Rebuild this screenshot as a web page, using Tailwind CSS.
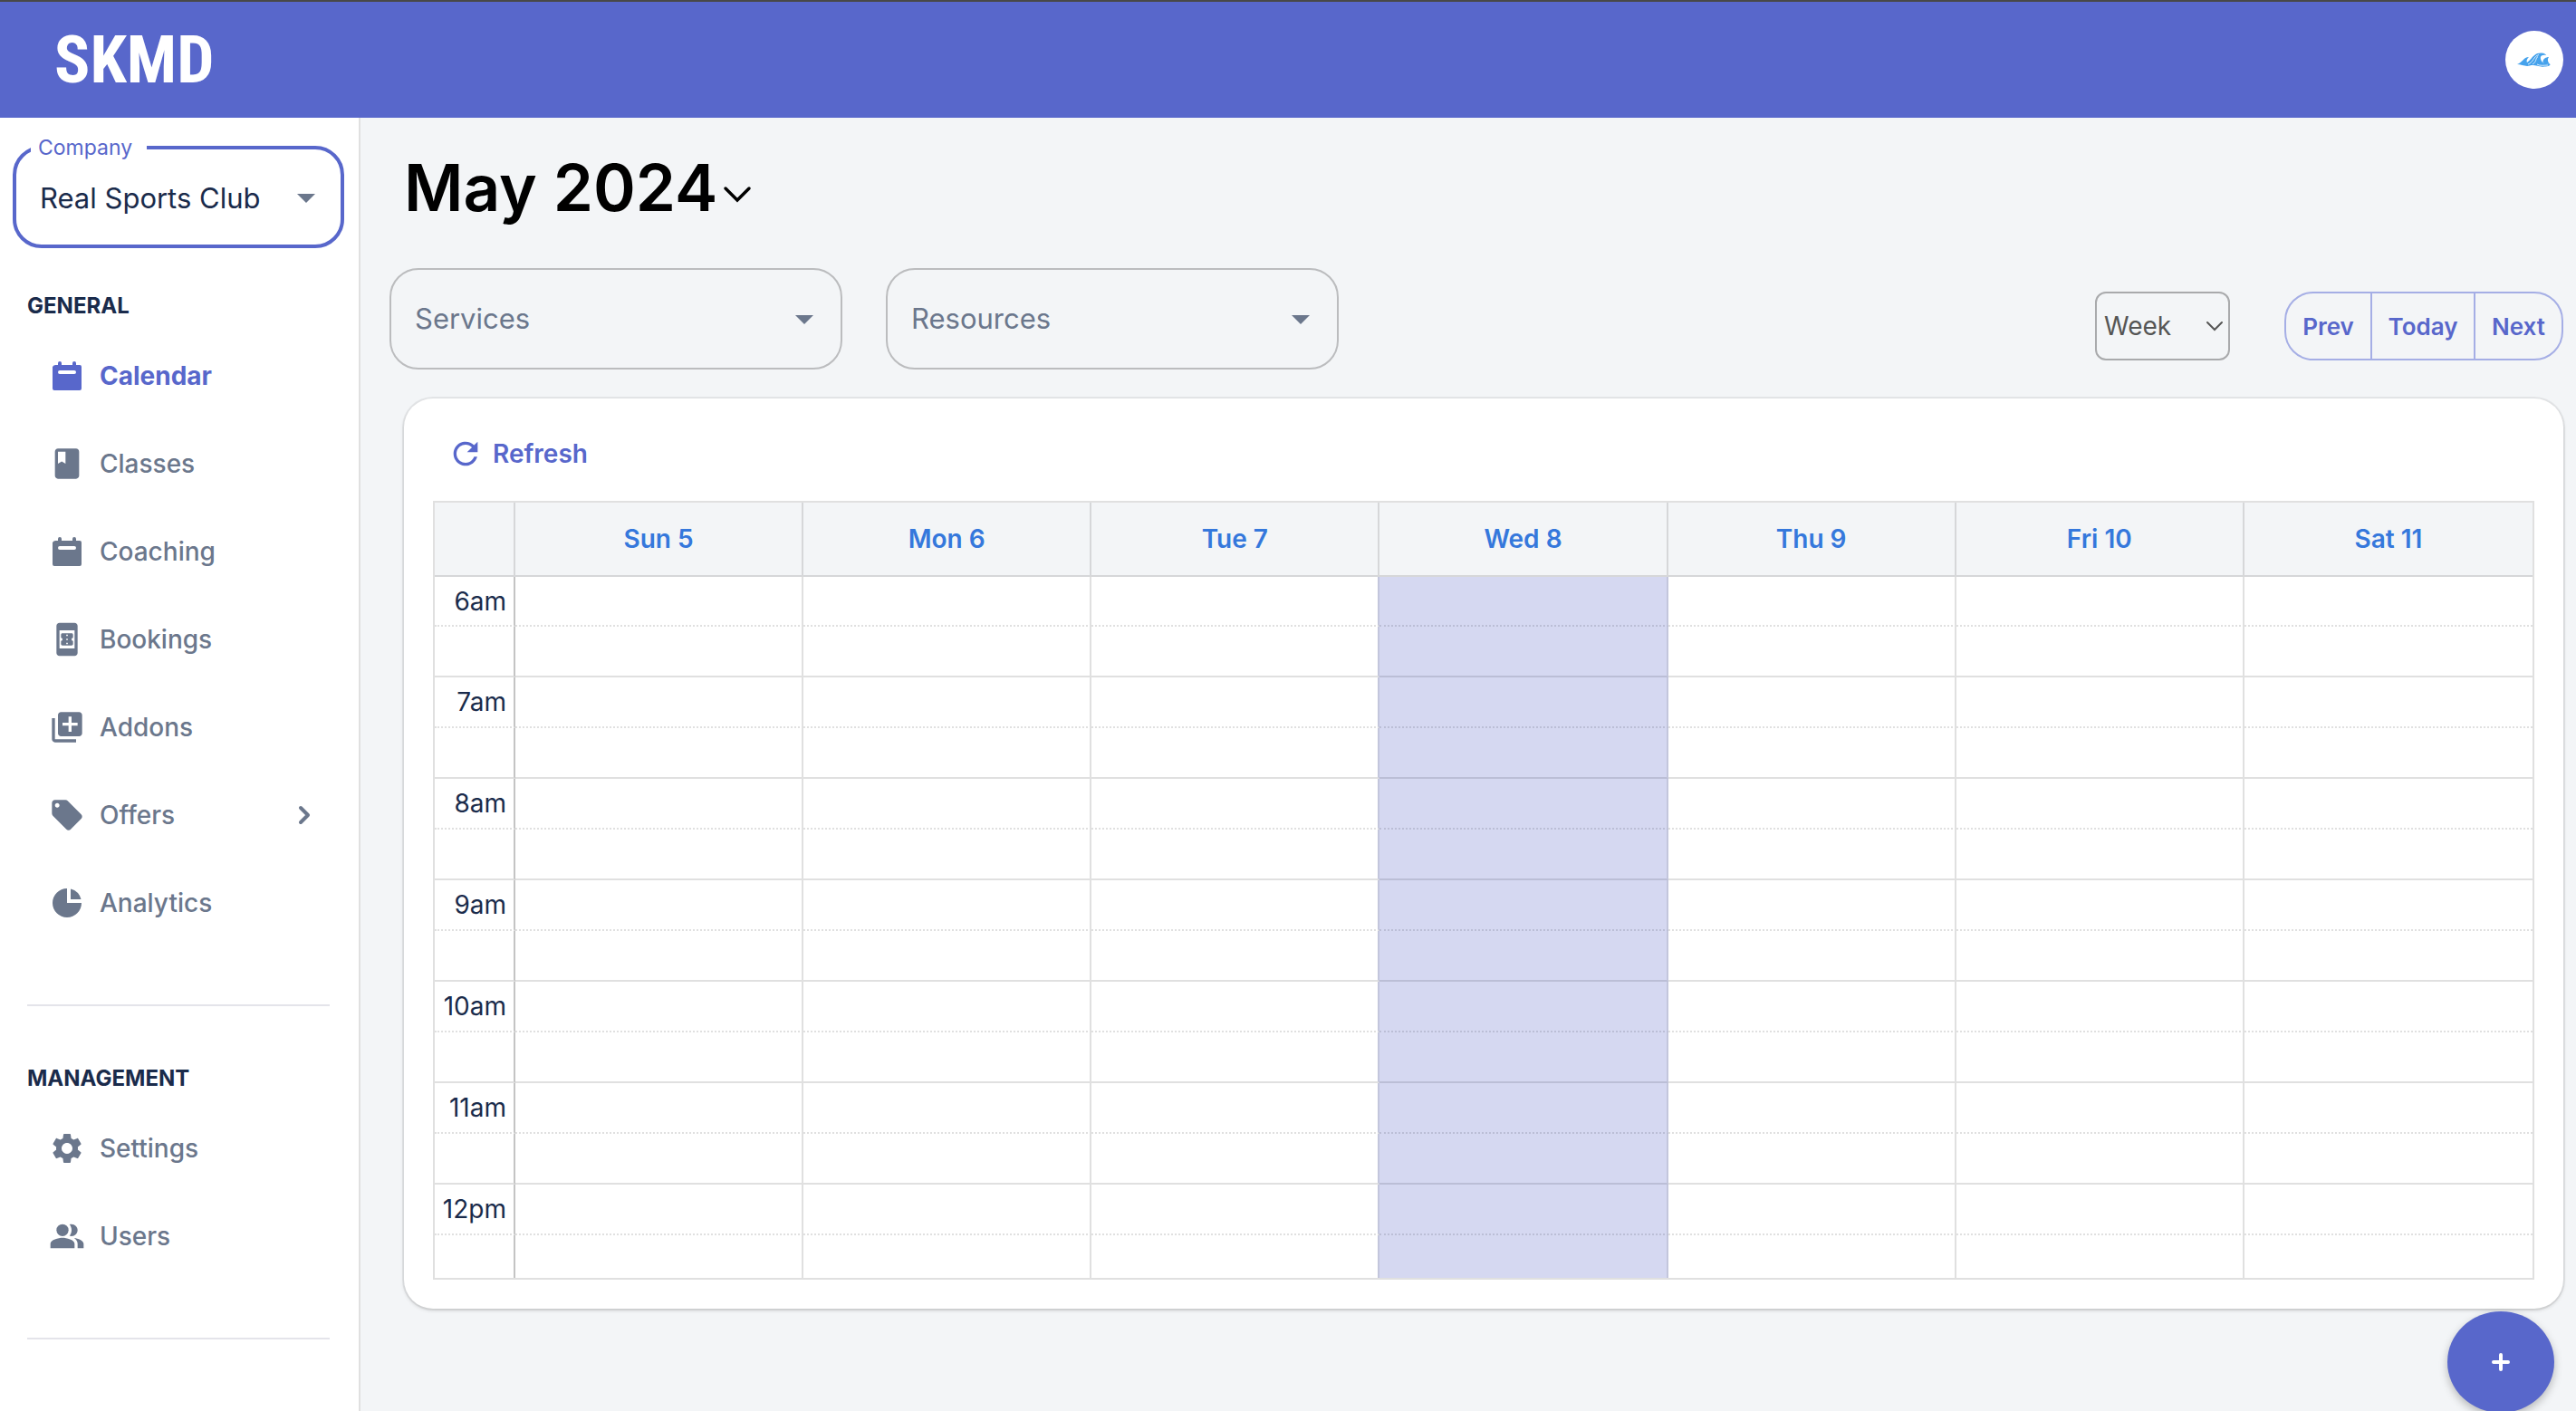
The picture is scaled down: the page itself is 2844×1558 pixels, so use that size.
<!DOCTYPE html>
<html lang="en">
<head>
  <meta charset="UTF-8" />
  <meta name="viewport" content="width=device-width, initial-scale=1.0"/>
  <title>SKMD - Calendar</title>
  <script src="https://cdn.jsdelivr.net/npm/@tailwindcss/browser@4"></script>
  <style>
    body {
      font-family: 'Inter', 'Liberation Sans', sans-serif;
    }
  </style>
</head>
<body class="min-h-screen flex flex-col bg-[#f3f5f7] text-[#1a2b4b]">

  <!-- Header -->
  <header class="h-[130px] shrink-0 bg-[#5867cb] border-t-2 border-[#484848] pl-[60px] pr-3.5 flex justify-between items-center">
    <a href="#" class="text-white font-bold text-[73px] leading-none font-['Roboto_Condensed','Roboto',sans-serif]">SKMD</a>
    <button type="button" aria-label="Account" class="size-16 rounded-full bg-white flex items-center justify-center">
      <svg class="w-[38px] h-4" viewBox="0 0 38 16" fill="#45a2ec">
        <path d="M0 13C5 12 7 5 13 5C11 7 10 9 11 11C17 7 18 0 27 0.500C30 0.700 32 2 32 3C28 2 25 4 26 7C26.500 10 29 12 32 12L36 12.500C38 14 34 16 30 15.500C24 16.500 20 13 14 14.500C9 16 5 13 0 13Z"/>
        <path d="M35 5C32 5 28 7 28.500 11C30 13 34 12 36 13C34 10 33 8 35 5Z"/>
        <path d="M12 13C18 11 18 4 24 2.500M17 13C22 10 20 6 23 4.500M22 13C25 15 30 14 34 14" fill="none" stroke="#fff" stroke-width="0.800"/>
      </svg>
    </button>
  </header>

  <div class="flex-grow flex">

    <!-- Sidebar -->
    <aside class="w-[398px] shrink-0 bg-white border-r-2 border-[#e0e0e0] pt-[31px]">
      <div class="relative ml-3.5 mr-4">
        <label for="company" class="absolute left-5 -top-3.5 h-8 pl-2 pr-4 bg-white text-[23px] leading-8 text-[#5867cb]">Company</label>
        <select id="company" class="appearance-none w-full h-[113px] border-4 border-[#5867cb] rounded-[32px] pl-[26px] pt-1 text-[31px] outline-none">
          <option>Real Sports Club</option>
        </select>
        <svg class="absolute right-8 top-[53px] w-5 h-2.5 pointer-events-none" viewBox="0 0 20 10" fill="#6b778c"><path d="M0 0h20L10 10z"/></svg>
      </div>

      <nav>
        <h2 class="mt-12 pl-[30px] text-2xl font-bold">GENERAL</h2>
        <ul class="mt-3 text-[28px] font-medium text-[#6b778c]">
          <li><a href="#" class="h-[97px] pl-[54px] flex items-center gap-4 font-bold text-[#5867cb]">
            <svg class="size-10" viewBox="0 0 20 20" fill="currentColor"><path fill-rule="evenodd" clip-rule="evenodd" d="M6 2a1 1 0 0 0-1 1v1H4a2 2 0 0 0-2 1v12a1 1 0 0 0 1 1h14a1 1 0 0 0 1-1V5a1 1 0 0 0-1-1h-2V3a1 1 0 1 0-2 0v1H7V3a1 1 0 0 0-1-1zm0 5a1 1 0 0 0 0 2h8a1 1 0 1 0 0-2H6z"/></svg>
            Calendar</a></li>
          <li><a href="#" class="h-[97px] pl-[54px] flex items-center gap-4">
            <svg class="size-10" viewBox="0 0 24 24" fill="currentColor"><path d="M18 2H6c-1.100 0-2 .9-2 2v16c0 1.100.9 2 2 2h12c1.100 0 2-.9 2-2V4c0-1.100-.9-2-2-2zM6 4h5v8l-2.500-1.500L6 12V4z"/></svg>
            Classes</a></li>
          <li><a href="#" class="h-[97px] pl-[54px] flex items-center gap-4">
            <svg class="size-10" viewBox="0 0 20 20" fill="currentColor"><path fill-rule="evenodd" clip-rule="evenodd" d="M6 2a1 1 0 0 0-1 1v1H4a2 2 0 0 0-2 1v12a1 1 0 0 0 1 1h14a1 1 0 0 0 1-1V5a1 1 0 0 0-1-1h-2V3a1 1 0 1 0-2 0v1H7V3a1 1 0 0 0-1-1zm0 5a1 1 0 0 0 0 2h8a1 1 0 1 0 0-2H6z"/></svg>
            Coaching</a></li>
          <li><a href="#" class="h-[97px] pl-[54px] flex items-center gap-4">
            <svg class="size-10" viewBox="0 0 24 24" fill="currentColor"><path fill-rule="evenodd" d="M17 1H7c-1.100 0-2 .9-2 2v18c0 1.100.9 2 2 2h10c1.100 0 2-.9 2-2V3c0-1.100-.9-2-2-2zm0 17H7V6h10v12z"/><path fill-rule="evenodd" d="M16 11V9c0-.6-.4-1-1-1H9c-.6 0-1 .4-1 1v2c.6 0 1 .5 1 1s-.4 1-1 1v2c0 .6.4 1 1 1h6c.6 0 1-.4 1-1v-2c-.6 0-1-.5-1-1s.4-1 1-1zm-3.500 4.200h-1v-1h1v1zm0-2.700h-1v-1h1v1zm0-2.700h-1v-1h1v1z"/></svg>
            Bookings</a></li>
          <li><a href="#" class="h-[97px] pl-[54px] flex items-center gap-4">
            <svg class="size-10" viewBox="0 0 24 24" fill="currentColor"><path d="M4 6H2v14c0 1.100.9 2 2 2h14v-2H4V6zm16-4H8c-1.100 0-2 .9-2 2v12c0 1.100.9 2 2 2h12c1.100 0 2-.9 2-2V4c0-1.100-.9-2-2-2zm-1 9h-4v4h-2v-4H9V9h4V5h2v4h4v2z"/></svg>
            Addons</a></li>
          <li><a href="#" class="h-[97px] pl-[54px] pr-11 flex items-center gap-4">
            <svg class="size-10" viewBox="0 0 24 24" fill="currentColor"><path d="M21.410 11.580l-9-9C12.050 2.220 11.550 2 11 2H4c-1.100 0-2 .9-2 2v7c0 .55.220 1.050.590 1.420l9 9c.36.360.860.580 1.410.580.550 0 1.050-.22 1.410-.59l7-7c.37-.36.590-.86.590-1.410 0-.55-.23-1.060-.59-1.420zM5.500 7C4.670 7 4 6.330 4 5.500S4.670 4 5.500 4 7 4.670 7 5.500 6.330 7 5.500 7z"/></svg>
            <span class="flex-grow">Offers</span>
            <svg class="size-8" viewBox="0 0 32 32" fill="none" stroke="currentColor" stroke-width="4" stroke-linecap="round" stroke-linejoin="round"><path d="M12 8l8 8-8 8"/></svg></a></li>
          <li><a href="#" class="h-[97px] pl-[54px] flex items-center gap-4">
            <svg class="size-10" viewBox="0 0 20 20" fill="currentColor"><path d="M2 10a8 8 0 0 1 8-8v8h8a8 8 0 1 1-16 0z"/><path d="M12 2.252A8.014 8.014 0 0 1 17.748 8H12V2.252z"/></svg>
            Analytics</a></li>
        </ul>
        <hr class="mt-16 ml-[30px] mr-8 border-t-2 border-[#e4e4ea]">
        <h2 class="mt-16 pl-[30px] text-2xl font-bold">MANAGEMENT</h2>
        <ul class="mt-3 text-[28px] font-medium text-[#6b778c]">
          <li><a href="#" class="h-[97px] pl-[54px] flex items-center gap-4">
            <svg class="size-10" viewBox="0 0 24 24" fill="currentColor"><path d="M19.140 12.940c.04-.3.060-.61.060-.94 0-.32-.02-.64-.07-.94l2.030-1.580c.18-.14.230-.41.120-.61l-1.920-3.320c-.12-.22-.37-.29-.59-.22l-2.390.960c-.5-.38-1.030-.7-1.620-.94l-.36-2.540c-.04-.24-.24-.41-.48-.41h-3.840c-.24 0-.43.170-.47.410l-.36 2.540c-.59.240-1.130.570-1.620.940l-2.390-.96c-.22-.08-.47 0-.59.220L2.740 8.870c-.12.210-.08.470.120.610l2.030 1.580c-.05.300-.09.630-.09.940s.02.640.070.940l-2.030 1.580c-.18.140-.23.410-.12.610l1.920 3.320c.12.220.370.290.590.220l2.390-.96c.5.380 1.030.700 1.620.940l.36 2.540c.05.240.240.410.480.410h3.840c.24 0 .44-.17.470-.41l.36-2.540c.59-.24 1.130-.56 1.620-.94l2.390.960c.22.080.470 0 .59-.22l1.920-3.320c.12-.22.070-.47-.12-.61l-2.010-1.580zM12 15.600c-1.980 0-3.600-1.620-3.600-3.600s1.620-3.600 3.600-3.600 3.600 1.620 3.600 3.600-1.620 3.600-3.600 3.600z"/></svg>
            Settings</a></li>
          <li><a href="#" class="h-[97px] pl-[54px] flex items-center gap-4">
            <svg class="size-10" viewBox="0 0 24 24" fill="currentColor"><path d="M16.670 13.130C18.040 14.060 19 15.320 19 17v3h4v-3c0-2.180-3.570-3.470-6.330-3.870z"/><circle cx="9" cy="8" r="4"/><path d="M15 12c2.210 0 4-1.790 4-4s-1.790-4-4-4c-.47 0-.91.100-1.330.240C14.500 5.270 15 6.580 15 8s-.5 2.730-1.330 3.760c.42.140.860.240 1.330.240zM9 13c-2.670 0-8 1.340-8 4v3h16v-3c0-2.660-5.330-4-8-4z"/></svg>
            Users</a></li>
        </ul>
        <hr class="mt-16 ml-[30px] mr-8 border-t-2 border-[#e4e4ea]">
      </nav>
    </aside>

    <!-- Main Content -->
    <main class="flex-grow min-w-0 pt-8 pr-3.5 pl-8">
      <h1 class="pl-4">
        <button type="button" class="flex items-center gap-1.5 text-[71px] leading-[90px] font-semibold text-black">
          May 2024
          <svg class="w-8 h-5 mt-4" viewBox="0 0 32 20" fill="none" stroke="currentColor" stroke-width="3.500" stroke-linecap="round"><path d="M3 3l13 13L29 3"/></svg>
        </button>
      </h1>

      <div class="mt-11 flex items-start">
        <div class="relative w-[500px]">
          <select aria-label="Services" class="appearance-none w-full h-28 border-2 border-[#bbbcbe] rounded-[32px] pl-[26px] text-[31px] text-[#6b778c]">
            <option>Services</option>
          </select>
          <svg class="absolute right-8 top-[52px] w-5 h-2.5 pointer-events-none" viewBox="0 0 20 10" fill="#6b778c"><path d="M0 0h20L10 10z"/></svg>
        </div>
        <div class="relative w-[500px] ml-12">
          <select aria-label="Resources" class="appearance-none w-full h-28 border-2 border-[#bbbcbe] rounded-[32px] pl-[26px] text-[31px] text-[#6b778c]">
            <option>Resources</option>
          </select>
          <svg class="absolute right-8 top-[52px] w-5 h-2.5 pointer-events-none" viewBox="0 0 20 10" fill="#6b778c"><path d="M0 0h20L10 10z"/></svg>
        </div>

        <div class="relative ml-auto mt-[26px] w-[149px]">
          <select aria-label="View" class="appearance-none w-full h-[76px] border-2 border-[#a9aaac] rounded-xl pl-2 text-[28px] text-[#555]">
            <option>Week</option>
          </select>
          <svg class="absolute right-[7px] top-8 w-5 h-3 pointer-events-none" viewBox="0 0 20 12" fill="none" stroke="#555" stroke-width="2" stroke-linecap="round"><path d="M2 2l8 8 8-8"/></svg>
        </div>
        <div class="ml-[60px] mt-[26px] h-[76px] flex border-2 border-[#a5aee5] rounded-[32px] text-[26px] font-semibold text-[#5867cb]">
          <button type="button" class="w-[95px] border-r-2 border-[#a5aee5]">Prev</button>
          <button type="button" class="w-[114px] border-r-2 border-[#a5aee5]">Today</button>
          <button type="button" class="w-[95px]">Next</button>
        </div>
      </div>

      <!-- Calendar card -->
      <section class="mt-8 ml-4 p-8 bg-white rounded-[32px] shadow-[0_0_0_2px_rgba(0,0,0,0.06),0_2px_4px_rgba(0,0,0,0.14)]">
        <button type="button" class="ml-4 mt-2 h-[42px] flex items-center gap-2.5 text-[28px] font-semibold text-[#5867cb]">
          <svg class="size-10" viewBox="0 0 24 24" fill="currentColor"><path d="M17.650 6.350C16.200 4.900 14.210 4 12 4c-4.420 0-7.990 3.580-7.990 8s3.570 8 7.990 8c3.730 0 6.840-2.550 7.730-6h-2.080c-.82 2.330-3.040 4-5.650 4-3.310 0-6-2.690-6-6s2.690-6 6-6c1.660 0 3.140.690 4.220 1.780L13 11h7V4l-2.350 2.350z"/></svg>
          Refresh
        </button>

        <div class="mt-[31px] border-2 border-[#e0e0e0]">
          <table class="w-full table-fixed border-separate border-spacing-0 text-[28px]">
            <colgroup>
              <col class="w-[89px]"><col><col><col><col><col><col><col>
            </colgroup>
            <thead>
              <tr class="h-[82px] bg-[#f3f5f7] text-[#3578dc] *:font-semibold">
                <td class="border-r-2 border-b-2 border-[#d6d7d9]"></td>
                <th class="border-r-2 border-b-2 border-[#d6d7d9]">Sun 5</th>
                <th class="border-r-2 border-b-2 border-[#d6d7d9]">Mon 6</th>
                <th class="border-r-2 border-b-2 border-[#d6d7d9]">Tue 7</th>
                <th class="border-r-2 border-b-2 border-[#d6d7d9]">Wed 8</th>
                <th class="border-r-2 border-b-2 border-[#d6d7d9]">Thu 9</th>
                <th class="border-r-2 border-b-2 border-[#d6d7d9]">Fri 10</th>
                <th class="border-b-2 border-[#d6d7d9]">Sat 11</th>
              </tr>
            </thead>
            <tbody id="slots"></tbody>
          </table>
        </div>
      </section>
    </main>
  </div>

  <!-- Add button -->
  <button type="button" aria-label="Add" class="fixed right-6 -bottom-0.5 w-[118px] h-28 rounded-[50%] bg-[#5867cb] flex items-center justify-center shadow-[0_4px_10px_rgba(0,0,0,0.25)]">
    <svg class="size-5" viewBox="0 0 20 20" stroke="#fff" stroke-width="4" stroke-linecap="round"><path d="M10 2v16M2 10h16"/></svg>
  </button>

  <script>
    const hours = ["6am", "7am", "8am", "9am", "10am", "11am", "12pm"];
    const today = 3;
    const slots = document.getElementById("slots");

    // One row per half hour: dotted line after the label, solid after the hour
    function addRow(label, height, line) {
      const row = document.createElement("tr");
      row.className = height;
      let html = `<td class="p-0 pr-2 text-right leading-8 border-r-2 border-r-[#c4c4c4] ${line}">${label}</td>`;
      for (let day = 0; day < 7; day++) {
        const right = day === 6 ? "" : day === today || day === today - 1 ? "border-r-2 border-r-[#c3c6dc]" : "border-r-2 border-r-[#e0e0e0]";
        const cell = day === today ? line.replace("border-b-[#e0e0e0]", "border-b-[#bbbed6]") + " bg-[#d5d8f1]" : line;
        html += `<td class="p-0 ${right} ${cell}"></td>`;
      }
      row.innerHTML = html;
      slots.appendChild(row);
    }

    hours.forEach((hour, i) => {
      const last = i === hours.length - 1;
      addRow(hour, i === 0 ? "h-[55px]" : "h-[56px]", "border-b-2 border-b-[#e0e0e0] [border-bottom-style:dotted]");
      addRow("", last ? "h-[47px]" : "h-[56px]", last ? "" : "border-b-2 border-b-[#e0e0e0]");
    });
  </script>
</body>
</html>
